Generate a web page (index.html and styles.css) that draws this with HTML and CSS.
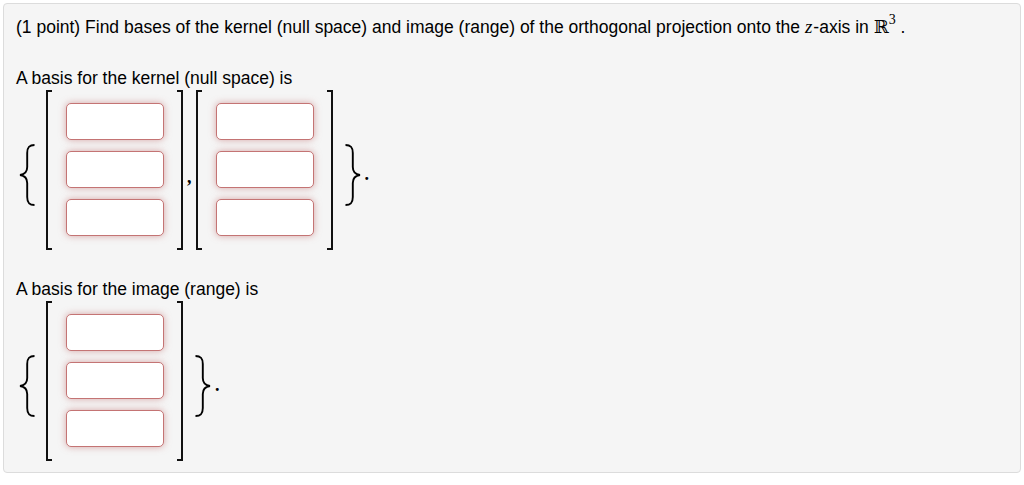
FILE: index.html
```html
<!DOCTYPE html>
<html>
<head>
<meta charset="utf-8">
<link rel="stylesheet" href="styles.css">
</head>
<body>
<div class="panel">
  <p class="title">(1 point) Find bases of the kernel (null space) and image (range) of the orthogonal projection onto the <span class="mi">z</span>-axis in <span class="bb">ℝ</span><sup class="sup">3</sup> .</p>

  <p class="label first">A basis for the kernel (null space) is</p>
  <div class="mrow">
    <svg class="brace" width="16" height="62" viewBox="0 0 16 62"><path d="M15.5,1 C10,1 8.2,3.5 8.2,9 L8.2,23 C8.2,28 6,30.3 1,31 C6,31.7 8.2,34 8.2,39 L8.2,53 C8.2,58.5 10,61 15.5,61" fill="none" stroke="#000" stroke-width="1.9"/></svg>
    <div class="matrix">
      <span class="lb"></span>
      <div class="col">
        <input class="ans" type="text">
        <input class="ans" type="text">
        <input class="ans" type="text">
      </div>
      <span class="rb"></span>
    </div>
    <span class="comma">,</span>
    <div class="matrix">
      <span class="lb"></span>
      <div class="col">
        <input class="ans" type="text">
        <input class="ans" type="text">
        <input class="ans" type="text">
      </div>
      <span class="rb"></span>
    </div>
    <svg class="brace rbrace" width="16" height="62" viewBox="0 0 16 62"><path d="M0.5,1 C6,1 7.8,3.5 7.8,9 L7.8,23 C7.8,28 10,30.3 15,31 C10,31.7 7.8,34 7.8,39 L7.8,53 C7.8,58.5 6,61 0.5,61" fill="none" stroke="#000" stroke-width="1.9"/></svg>
    <span class="period">.</span>
  </div>

  <p class="label second">A basis for the image (range) is</p>
  <div class="mrow">
    <svg class="brace" width="16" height="62" viewBox="0 0 16 62"><path d="M15.5,1 C10,1 8.2,3.5 8.2,9 L8.2,23 C8.2,28 6,30.3 1,31 C6,31.7 8.2,34 8.2,39 L8.2,53 C8.2,58.5 10,61 15.5,61" fill="none" stroke="#000" stroke-width="1.9"/></svg>
    <div class="matrix">
      <span class="lb"></span>
      <div class="col">
        <input class="ans" type="text">
        <input class="ans" type="text">
        <input class="ans" type="text">
      </div>
      <span class="rb"></span>
    </div>
    <svg class="brace rbrace" width="16" height="62" viewBox="0 0 16 62"><path d="M0.5,1 C6,1 7.8,3.5 7.8,9 L7.8,23 C7.8,28 10,30.3 15,31 C10,31.7 7.8,34 7.8,39 L7.8,53 C7.8,58.5 6,61 0.5,61" fill="none" stroke="#000" stroke-width="1.9"/></svg>
    <span class="period">.</span>
  </div>
</div>
</body>
</html>
```

FILE: styles.css
```css
html, body {
  margin: 0;
  padding: 0;
  background: #ffffff;
}
body {
  font-family: "Liberation Sans", Arial, Helvetica, sans-serif;
  font-size: 17.5px;
  color: #000;
}
.panel {
  margin: 3px 0 0 3px;
  box-sizing: content-box;
  background: #f5f5f5;
  border: 1px solid #dcdcdc;
  border-radius: 4px;
  padding: 13px 0 11px 12px;
  width: 1004px;
}
p {
  margin: 0;
  line-height: 20px;
}
.title {
  white-space: nowrap;
}
.mi {
  font-family: "Liberation Serif", "Times New Roman", serif;
  font-style: italic;
  font-size: 19px;
  padding-right: 1px;
}
.bb {
  font-family: "DejaVu Serif", serif;
  font-size: 18px;
}
.sup {
  font-family: "Liberation Serif", "Times New Roman", serif;
  font-size: 14px;
  vertical-align: 9px;
  line-height: 0;
}
.label.first {
  margin-top: 31px;
}
.label.second {
  margin-top: 29px;
}
.mrow {
  display: flex;
  align-items: center;
  margin-top: 2px;
}
.brace {
  display: block;
  margin: 10px 0 0 3px;
  flex: none;
}
.rbrace {
  margin: 10px 0 0 12px;
}
.matrix {
  display: flex;
  align-items: stretch;
  margin-left: 11px;
}
.lb, .rb {
  display: block;
  width: 4px;
  border: 2px solid #111;
}
.lb {
  border-right: none;
}
.rb {
  border-left: none;
}
.col {
  display: flex;
  flex-direction: column;
  gap: 11px;
  padding: 13px 13px 14px 14px;
}
.ans {
  display: block;
  box-sizing: border-box;
  width: 98px;
  height: 37px;
  margin: 0;
  padding: 0;
  background: #fff;
  border: 1px solid #c47474;
  border-radius: 5px;
  box-shadow: 0 0 7px rgba(190, 100, 100, 0.55);
  outline: none;
}
.comma {
  font-family: "Liberation Serif", serif;
  font-size: 18px;
  font-weight: bold;
  line-height: 1;
  margin: 14px 4px 0 4px;
}
.matrix + .comma + .matrix {
  margin-left: 0;
}
.period {
  font-family: "Liberation Serif", serif;
  font-size: 18px;
  font-weight: bold;
  line-height: 1;
  margin: 8px 0 0 4px;
}
```
